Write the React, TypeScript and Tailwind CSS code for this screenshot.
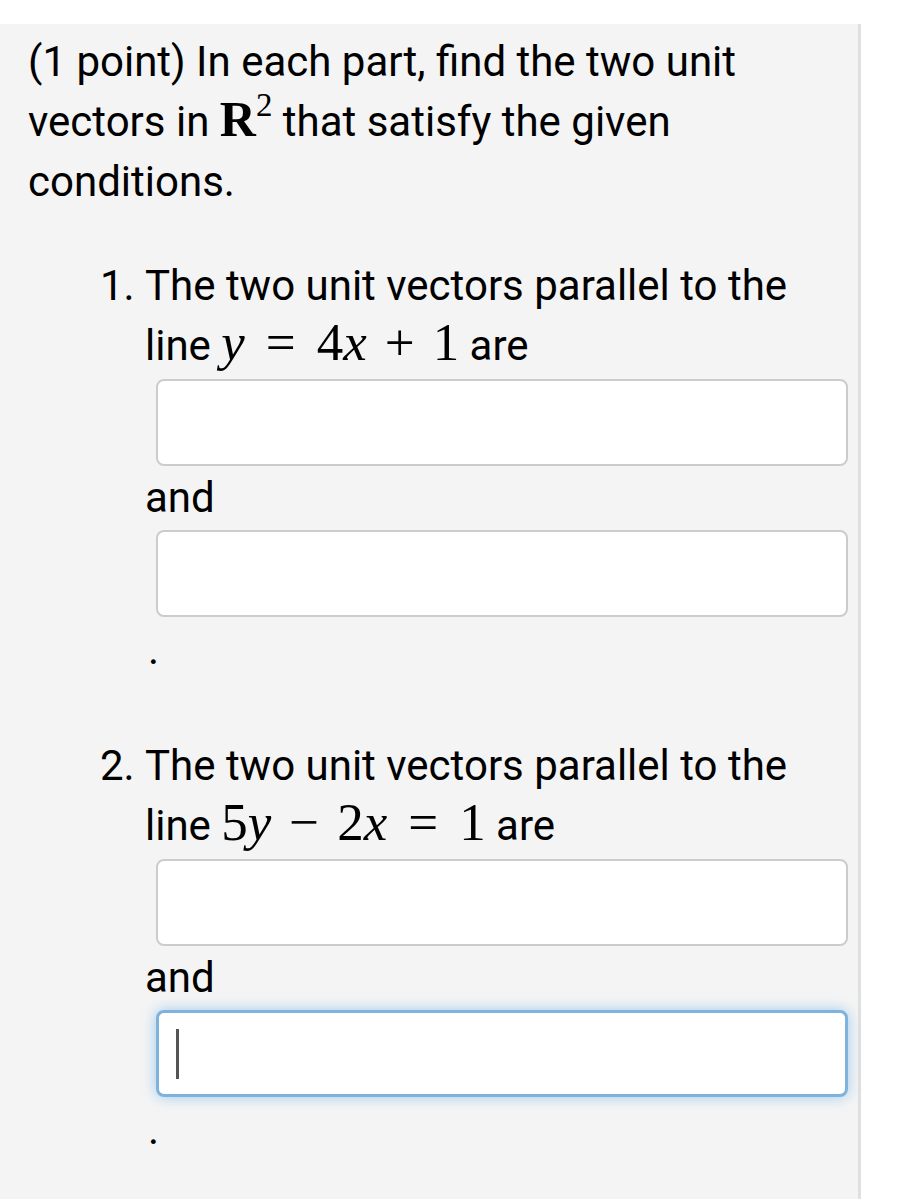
import React from "react";

function MathY1() {
  return (
    <span className="font-['Liberation_Serif',serif] text-[53px] leading-none">
      <span className="italic">y</span>
      <span className="mx-[21px]">=</span>
      <span>4</span>
      <span className="italic">x</span>
      <span className="mx-[18px]">+</span>
      <span>1</span>
    </span>
  );
}

function MathY2() {
  return (
    <span className="font-['Liberation_Serif',serif] text-[53px] leading-none">
      <span>5</span>
      <span className="italic">y</span>
      <span className="mx-[18px]">−</span>
      <span>2</span>
      <span className="italic">x</span>
      <span className="mx-[21px]">=</span>
      <span>1</span>
    </span>
  );
}

function Box({ focused }: { focused?: boolean }) {
  return (
    <div
      className={
        focused
          ? "ml-[11px] mr-[10px] my-[3px] h-[87px] rounded-[8px] border-[3px] border-[#80b3dc] bg-white shadow-[0_0_14px_rgba(102,175,233,0.6)] flex items-center pl-[17px]"
          : "ml-[11px] mr-[10px] my-[3px] h-[87px] rounded-[8px] border-2 border-[#cccccc] bg-white"
      }
    >
      {focused && <span className="block w-[3px] h-[50px] bg-[#555]" />}
    </div>
  );
}

function Item({ n, math }: { n: string; math: React.ReactNode }) {
  return (
    <div className="flex">
      <div className="w-[45px] shrink-0 h-[60px]">{n}</div>
      <div className="flex-1">
        <div className="h-[60px] whitespace-nowrap">The two unit vectors parallel to the</div>
        <div className="h-[60px] whitespace-nowrap">
          line {math} are
        </div>
        <Box />
        <div className="h-[60px] -my-[1px]">and</div>
        <Box focused={n === "2."} />
        <div className="h-[60px] pl-[3px]">.</div>
      </div>
    </div>
  );
}

export default function App() {
  return (
    <div className="w-[922px] h-[1199px] bg-white pt-[24px] font-['Roboto',sans-serif] text-black text-[42px] leading-[60px] overflow-hidden">
      <div className="w-[861px] h-full bg-[#f4f4f4] border-r-[3px] border-[#e0e0e0] pl-[28px] pt-[8px]">
        <div className="pr-[10px]">
          <div className="h-[60px] whitespace-nowrap">(1 point) In each part, find the two unit</div>
          <div className="h-[60px] whitespace-nowrap">
            vectors in{" "}
            <span className="font-['Liberation_Serif',serif] font-bold text-[50px] leading-none">
              R<sup className="font-normal text-[33px] relative top-[-20px] align-baseline">2</sup>
            </span>{" "}
            that satisfy the given
          </div>
          <div className="h-[60px]">conditions.</div>
        </div>
        <div className="mt-[44px] pl-[72px]">
          <Item n="1." math={<MathY1 />} />
          <div className="h-[56px]" />
          <Item n="2." math={<MathY2 />} />
        </div>
      </div>
    </div>
  );
}
